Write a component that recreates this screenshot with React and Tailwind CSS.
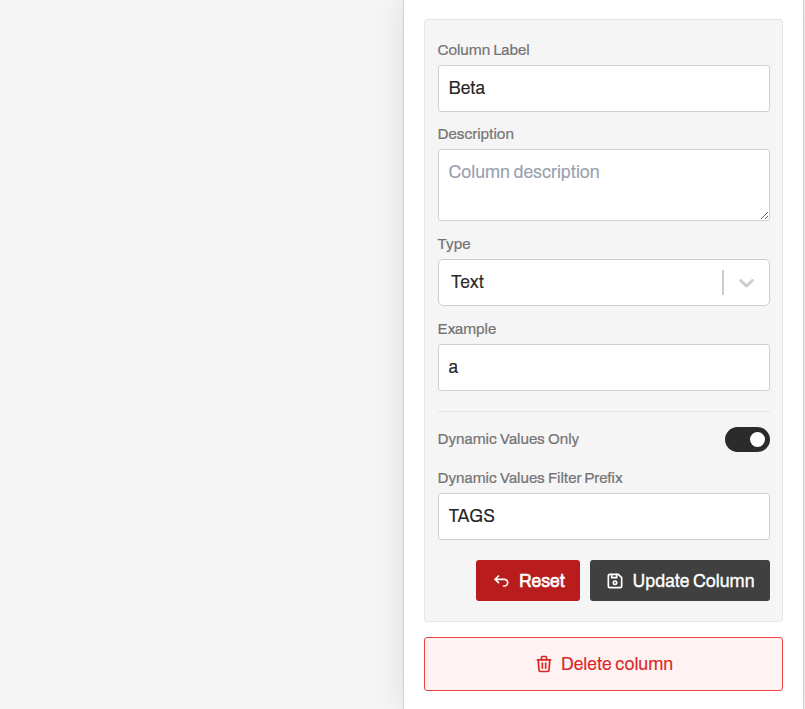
import { useState } from 'react';
import { TbArrowBackUp, TbDeviceFloppy, TbTrash } from 'react-icons/tb';

const inputClass =
  'block w-full rounded-[3px] border border-[#d0d0d0] bg-white px-[9.5px] text-[17.5px] text-[#262626] outline-none [-webkit-text-stroke:0.15px_currentColor] placeholder:text-gray-400';

function Label({ children }) {
  return (
    <span className="-ml-[0.5px] block text-[15px] leading-[20px] text-[#737373] [-webkit-text-stroke:0.2px_currentColor]">
      {children}
    </span>
  );
}

function Field({ label, className = '', children }) {
  return (
    <label className={`block ${className}`}>
      <Label>{label}</Label>
      <div className="mt-[5px]">{children}</div>
    </label>
  );
}

function Select({ value }) {
  return (
    <div className="flex h-[47px] items-center rounded-[5px] border border-[#cccccc] bg-white text-[17.5px] text-[#2b2b2b] [-webkit-text-stroke:0.15px_currentColor]">
      <span className="flex-1 pt-[2px] pl-3">{value}</span>
      <span className="h-[25px] w-[2px] bg-[#cccccc]" />
      <span className="flex w-[45px] justify-center">
        <svg className="h-[25px] w-[25px] fill-[#cccccc]" viewBox="0 0 20 20">
          <path d="M4.516 7.548c0.436-0.446 1.043-0.481 1.576 0l3.908 3.747 3.908-3.747c0.533-0.481 1.141-0.446 1.574 0 0.436 0.445 0.408 1.197 0 1.615-0.406 0.418-4.695 4.502-4.695 4.502-0.217 0.223-0.502 0.335-0.787 0.335s-0.57-0.112-0.789-0.335c0 0-4.287-4.084-4.695-4.502s-0.436-1.17 0-1.615z" />
        </svg>
      </span>
    </div>
  );
}

function Toggle({ checked, onChange }) {
  return (
    <button
      type="button"
      role="switch"
      aria-checked={checked}
      onClick={() => onChange(!checked)}
      className={`flex h-[25px] w-[45px] items-center rounded-full px-[5px] ${
        checked ? 'justify-end bg-[#2b2b2b]' : 'justify-start bg-neutral-300'
      }`}
    >
      <span className="h-[15px] w-[15px] rounded-full bg-white" />
    </button>
  );
}

export default function App() {
  const [label, setLabel] = useState('Beta');
  const [description, setDescription] = useState('');
  const [example, setExample] = useState('a');
  const [dynamicOnly, setDynamicOnly] = useState(true);
  const [prefix, setPrefix] = useState('TAGS');

  return (
    <div className="flex h-[709px] w-[805px] justify-end overflow-hidden bg-[#f5f5f5] pr-px font-['Archivo','Liberation_Sans',sans-serif]">
      <aside className="w-[401px] border-x border-[#cfcfcf] bg-white px-5 pt-[19px] shadow-[0_0_30px_rgba(0,0,0,0.1)]">
        <div className="h-[603px] rounded-[3px] border border-[#e5e5e5] bg-[#f5f5f5] pt-5 pr-3 pl-[13px]">
          <Field label="Column Label">
            <input className={`${inputClass} h-[47px]`} value={label} onChange={(e) => setLabel(e.target.value)} />
          </Field>

          <Field label="Description" className="mt-3">
            <textarea
              className={`${inputClass} h-[72px] pt-[9px] leading-[27px]`}
              placeholder="Column description"
              value={description}
              onChange={(e) => setDescription(e.target.value)}
            />
          </Field>

          <Field label="Type" className="mt-[13px]">
            <Select value="Text" />
          </Field>

          <Field label="Example" className="mt-[13px]">
            <input className={`${inputClass} h-[47px]`} value={example} onChange={(e) => setExample(e.target.value)} />
          </Field>

          <div className="mt-5 flex items-start justify-between border-t border-[#e5e5e5] pt-[15px]">
            <div className="pt-[2px]">
              <Label>Dynamic Values Only</Label>
            </div>
            <Toggle checked={dynamicOnly} onChange={setDynamicOnly} />
          </div>

          <Field label="Dynamic Values Filter Prefix" className="mt-4">
            <input className={`${inputClass} h-[47px]`} value={prefix} onChange={(e) => setPrefix(e.target.value)} />
          </Field>

          <div className="mt-5 flex justify-end gap-[10px] text-[17.5px] text-white">
            <button type="button" className="flex h-[41px] w-[104px] items-center rounded-[3px] bg-[#b91c1c] pl-[15px]">
              <TbArrowBackUp className="h-5 w-5" />
              <span className="ml-2 pt-[3px] [-webkit-text-stroke:0.6px_currentColor]">Reset</span>
            </button>
            <button type="button" className="flex h-[41px] w-[180px] items-center rounded-[3px] bg-[#404040] pl-[15px]">
              <TbDeviceFloppy className="h-5 w-5" />
              <span className="ml-[7.5px] pt-[3px] [-webkit-text-stroke:0.35px_currentColor]">Update Column</span>
            </button>
          </div>
        </div>

        <button
          type="button"
          className="mt-[15px] flex h-[54px] w-full items-center justify-center gap-[7px] rounded-[3px] border border-[#ef4444] bg-[#fef2f2] text-[17.5px] text-[#dc2626]"
        >
          <TbTrash className="h-5 w-5" />
          <span className="pt-[2px] [-webkit-text-stroke:0.15px_currentColor]">Delete column</span>
        </button>
      </aside>
    </div>
  );
}
